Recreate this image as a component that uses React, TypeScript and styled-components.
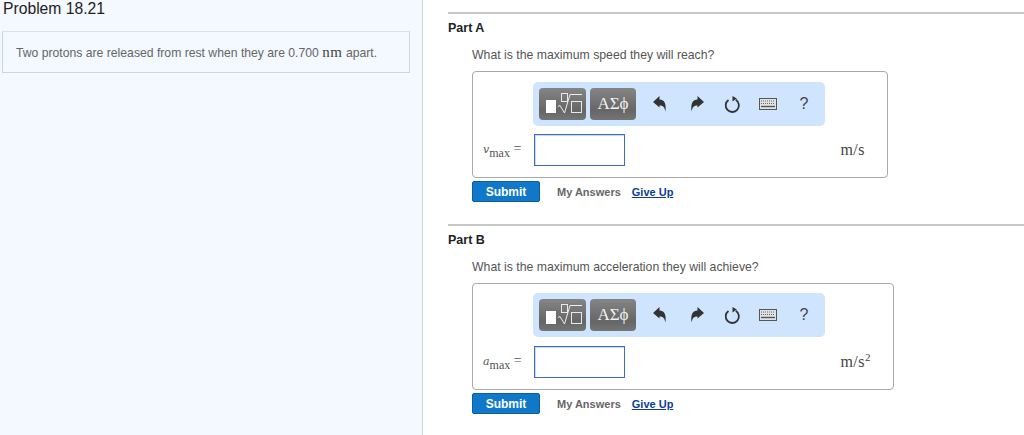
import React from "react";
import styled, { createGlobalStyle } from "styled-components";

const GlobalStyle = createGlobalStyle`
  html, body {
    margin: 0;
    padding: 0;
    background: #fff;
  }
  body {
    font-family: "Liberation Sans", Arial, sans-serif;
  }
`;

const Page = styled.div`
  display: flex;
  width: 1024px;
  height: 435px;
  overflow: hidden;
`;

const Sidebar = styled.aside`
  box-sizing: border-box;
  width: 423px;
  height: 100%;
  flex: none;
  background: #f4f8ff;
  border-right: 1px solid #c4d6e8;
`;

const Title = styled.h1`
  margin: 0;
  padding: 0 0 0 3px;
  font-size: 15.7px;
  line-height: 17px;
  font-weight: 400;
  color: #222;
`;

const Statement = styled.div`
  box-sizing: border-box;
  width: 408px;
  height: 42px;
  margin: 14px 0 0 2px;
  padding-left: 13px;
  display: flex;
  align-items: center;
  border: 1px solid #c5d8e8;
  border-top-color: #d5e2ee;
  font-size: 12.2px;
  color: #666;
`;

const Unit = styled.span`
  font-family: "Liberation Serif", serif;
  font-size: 15px;
  letter-spacing: 0.6px;
  color: #444;
`;

const Main = styled.main`
  flex: 1;
  padding-left: 25px;
  padding-top: 12px;
`;

const Part = styled.section`
  height: 212px;
  box-sizing: border-box;
  border-top: 2px solid #c8c8c8;
`;

const PartTitle = styled.h2`
  margin: 7px 0 0;
  font-size: 12.5px;
  line-height: 15px;
  font-weight: 700;
  color: #222;
`;

const Body = styled.div`
  padding-left: 24px;
`;

const Question = styled.p`
  margin: 12px 0 0;
  font-size: 12.25px;
  line-height: 15px;
  color: #555;
`;

const AnswerBox = styled.div<{ $wide?: boolean }>`
  box-sizing: border-box;
  width: ${(p) => (p.$wide ? 422 : 416)}px;
  height: 107px;
  margin-top: 8px;
  padding: ${(p) => (p.$wide ? 9 : 10)}px 0 0 60px;
  border: 1px solid #aaa;
  border-radius: 4px;
`;

const Toolbar = styled.div`
  box-sizing: border-box;
  width: 292px;
  height: 44px;
  display: flex;
  align-items: center;
  padding-left: 6px;
  background: #cfe5fd;
  border-radius: 5px;
`;

const TemplateButton = styled.div<{ $width: number }>`
  width: ${(p) => p.$width}px;
  height: 32px;
  margin-right: 4px;
  padding-bottom: 1px;
  box-sizing: border-box;
  display: flex;
  align-items: center;
  justify-content: center;
  border-radius: 4px;
  background: linear-gradient(#858585, #666 70%, #757575);
  color: #f2f2f2;
  font-family: "Liberation Serif", serif;
  font-size: 17px;
`;

const ToolSlot = styled.div<{ $width: number }>`
  width: ${(p) => p.$width}px;
  display: flex;
  justify-content: center;
  align-items: center;
  color: #444;
  font-size: 16px;
`;

const AnswerRow = styled.div<{ $wide?: boolean }>`
  display: flex;
  align-items: center;
  height: 32px;
  margin-top: ${(p) => (p.$wide ? 9 : 8)}px;
  margin-left: -50px;
`;

const Label = styled.div`
  width: 51px;
  white-space: nowrap;
  font-family: "Liberation Serif", serif;
  font-size: 14px;
  line-height: 14px;
  padding-bottom: 2px;
  color: #555;
  sub {
    font-size: 12px;
    line-height: 0;
  }
  i {
    font-family: "DejaVu Serif", serif;
    font-size: 11px;
  }
`;

const Field = styled.div`
  box-sizing: border-box;
  width: 91px;
  height: 32px;
  border: 1px solid #3c6fc4;
  box-shadow: inset 1px 1px 0 #cbd9f4;
  background: #fff;
`;

const UnitLabel = styled.div`
  margin-left: auto;
  margin-right: 22px;
  font-family: "Liberation Serif", serif;
  font-size: 16px;
  letter-spacing: 0.5px;
  color: #444;
  sup {
    font-size: 11px;
    line-height: 0;
  }
`;

const Actions = styled.div`
  display: flex;
  align-items: center;
  margin-top: 3px;
`;

const SubmitButton = styled.button`
  box-sizing: border-box;
  width: 68px;
  height: 21px;
  padding: 0;
  background: #0f78c8;
  border: 1px solid #0c5f9e;
  border-radius: 2px;
  color: #fff;
  font-family: inherit;
  font-size: 12px;
  font-weight: 700;
`;

const MyAnswers = styled.span`
  margin-left: 17px;
  font-size: 11px;
  font-weight: 700;
  color: #666;
`;

const GiveUp = styled.a`
  margin-left: 11px;
  font-size: 11px;
  font-weight: 700;
  color: #0b3c9c;
  text-decoration: underline;
`;

const RadicalIcon = () => (
  <svg width="47" height="32" viewBox="0 0 47 32">
    <rect x="7" y="12" width="10" height="13" fill="#fff" />
    <rect x="22.500" y="5.500" width="6" height="8" fill="none" stroke="#e8e8e8" />
    <path d="M19 18.500l2-1 4.500 7.500 5.500-18.500h12" fill="none" stroke="#eee" strokeWidth="1" />
    <rect x="32.500" y="13.500" width="10" height="11" fill="none" stroke="#e8e8e8" />
  </svg>
);

const UndoIcon = () => (
  <svg width="14" height="16" viewBox="0 0 14 16">
    <path d="M0 6L6.500 0V3.500C11 3.500 13.500 7 12.500 15.500C11.500 11 10 9.500 6.500 9.500V11.500Z" fill="#333" />
  </svg>
);

const RedoIcon = () => (
  <svg width="14" height="16" viewBox="0 0 14 16">
    <path d="M14 6L7.500 0V3.500C3 3.500 0.500 7 1.500 15.500C2.500 11 4 9.500 7.500 9.500V11.500Z" fill="#333" />
  </svg>
);

const ResetIcon = () => (
  <svg width="17" height="18" viewBox="0 0 17 18">
    <path d="M4.500 5A6.600 6.600 0 1 0 11.800 4.800" fill="none" stroke="#333" strokeWidth="1.800" />
    <path d="M8.500 1V6.500L12.800 3.500Z" fill="#333" />
  </svg>
);

const KeyboardIcon = () => (
  <svg width="18" height="12" viewBox="0 0 18 12">
    <rect x="0.500" y="0.500" width="17" height="11" fill="#dfe3e8" stroke="#555" />
    <path d="M2 3h14M2 5.500h14" stroke="#666" strokeWidth="1" strokeDasharray="1 1" />
    <path d="M2 8.500h14" stroke="#555" strokeWidth="1.400" />
  </svg>
);

const MathToolbar = () => (
  <Toolbar>
    <TemplateButton $width={47}>
      <RadicalIcon />
    </TemplateButton>
    <TemplateButton $width={46}>ΑΣϕ</TemplateButton>
    <ToolSlot $width={40}>
      <UndoIcon />
    </ToolSlot>
    <ToolSlot $width={33}>
      <RedoIcon />
    </ToolSlot>
    <ToolSlot $width={39}>
      <ResetIcon />
    </ToolSlot>
    <ToolSlot $width={32}>
      <KeyboardIcon />
    </ToolSlot>
    <ToolSlot $width={40}>?</ToolSlot>
  </Toolbar>
);

type PartProps = {
  name: string;
  question: string;
  symbol: string;
  wide?: boolean;
  unit: React.ReactNode;
};

const ProblemPart = ({ name, question, symbol, wide, unit }: PartProps) => (
  <Part>
    <PartTitle>{name}</PartTitle>
    <Body>
      <Question>{question}</Question>
      <AnswerBox $wide={wide}>
        <MathToolbar />
        <AnswerRow $wide={wide}>
          <Label>
            <i>{symbol}</i>
            <sub>max</sub> =
          </Label>
          <Field />
          <UnitLabel>{unit}</UnitLabel>
        </AnswerRow>
      </AnswerBox>
      <Actions>
        <SubmitButton>Submit</SubmitButton>
        <MyAnswers>My Answers</MyAnswers>
        <GiveUp>Give Up</GiveUp>
      </Actions>
    </Body>
  </Part>
);

export default function App() {
  return (
    <Page>
      <GlobalStyle />
      <Sidebar>
        <Title>Problem 18.21</Title>
        <Statement>
          <span>
            Two protons are released from rest when they are 0.700 <Unit>nm</Unit> apart.
          </span>
        </Statement>
      </Sidebar>
      <Main>
        <ProblemPart
          name="Part A"
          question="What is the maximum speed they will reach?"
          symbol="v"
          unit="m/s"
        />
        <ProblemPart
          name="Part B"
          question="What is the maximum acceleration they will achieve?"
          symbol="a"
          wide
          unit={
            <>
              m/s<sup>2</sup>
            </>
          }
        />
      </Main>
    </Page>
  );
}
